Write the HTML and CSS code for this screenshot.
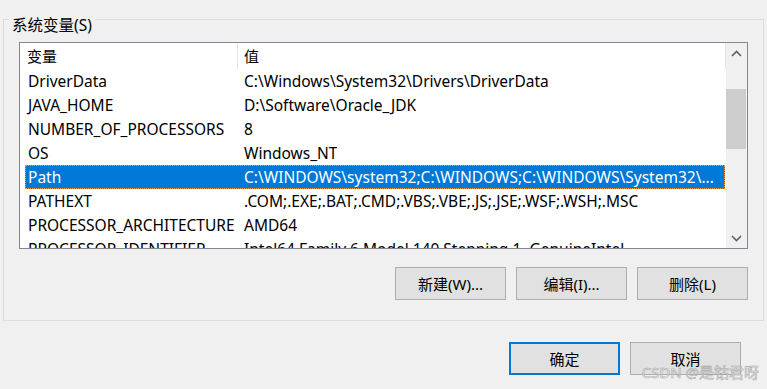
FILE: index.html
```html
<!DOCTYPE html>
<html lang="zh-CN">
<head>
<meta charset="utf-8">
<title>系统变量</title>
<link rel="stylesheet" href="styles.css">
</head>
<body>
<div class="dialog">
  <div class="group">
    <div class="group-title">系统变量(S)</div>
    <div class="listview">
      <div class="list-main">
        <div class="header">
          <div class="hcell hname">变量</div>
          <div class="hcell hvalue">值</div>
        </div>
        <div class="rows">
          <div class="row"><div class="cname">DriverData</div><div class="cvalue">C:\Windows\System32\Drivers\DriverData</div></div>
          <div class="row"><div class="cname">JAVA_HOME</div><div class="cvalue">D:\Software\Oracle_JDK</div></div>
          <div class="row"><div class="cname">NUMBER_OF_PROCESSORS</div><div class="cvalue">8</div></div>
          <div class="row"><div class="cname">OS</div><div class="cvalue">Windows_NT</div></div>
          <div class="row selected"><div class="cname">Path</div><div class="cvalue">C:\WINDOWS\system32;C:\WINDOWS;C:\WINDOWS\System32\...</div></div>
          <div class="row"><div class="cname">PATHEXT</div><div class="cvalue">.COM;.EXE;.BAT;.CMD;.VBS;.VBE;.JS;.JSE;.WSF;.WSH;.MSC</div></div>
          <div class="row"><div class="cname">PROCESSOR_ARCHITECTURE</div><div class="cvalue">AMD64</div></div>
          <div class="row"><div class="cname">PROCESSOR_IDENTIFIER</div><div class="cvalue">Intel64 Family 6 Model 140 Stepping 1, GenuineIntel</div></div>
        </div>
      </div>
      <div class="scrollbar">
        <div class="sb-arrow">
          <svg width="11" height="7" viewBox="0 0 11 7"><path d="M1 6 L5.5 1.5 L10 6" fill="none" stroke="#606060" stroke-width="1.6"/></svg>
        </div>
        <div class="sb-track">
          <div class="sb-thumb"></div>
        </div>
        <div class="sb-arrow">
          <svg width="11" height="7" viewBox="0 0 11 7"><path d="M1 1 L5.5 5.5 L10 1" fill="none" stroke="#606060" stroke-width="1.6"/></svg>
        </div>
      </div>
    </div>
    <div class="group-buttons">
      <button class="btn">新建(W)...</button>
      <button class="btn">编辑(I)...</button>
      <button class="btn">删除(L)</button>
    </div>
  </div>
  <div class="dialog-buttons">
    <button class="btn default">确定</button>
    <button class="btn">取消</button>
  </div>
  <div class="watermark">CSDN @是钴君呀</div>
</div>
</body>
</html>
```
FILE: styles.css
```css
html, body {
  margin: 0;
  padding: 0;
  background: #f0f0f0;
}
body {
  font-family: "Noto Sans", "Noto Sans CJK SC", sans-serif;
  font-size: 15.5px;
  color: #000;
  width: 767px;
  height: 389px;
  overflow: hidden;
}
.dialog {
  position: relative;
  padding-top: 19px;
  height: 370px;
}
.group {
  position: relative;
  margin: 0 3px 0 3px;
  border: 1px solid #dcdcdc;
  padding: 22px 15px 20px 15px;
}
.group-title {
  position: absolute;
  top: -5px;
  left: 5px;
  padding: 0 3px;
  line-height: 20px;
  font-size: 15.5px;
  background: #f0f0f0;
}
.listview {
  display: flex;
  height: 205px;
  border: 1px solid #828790;
  background: #fff;
  overflow: hidden;
}
.list-main {
  flex: 1;
  min-width: 0;
  overflow: hidden;
}
.header {
  display: flex;
  height: 26px;
  align-items: stretch;
  width: 705px;
  border-right: 1px solid #e5e5e5;
}
.hcell {
  line-height: 26px;
  white-space: nowrap;
  font-size: 15px;
}
.hname {
  width: 210px;
  padding-left: 7px;
  border-right: 1px solid #e5e5e5;
}
.hvalue {
  padding-left: 6px;
}
.rows {
  padding-left: 5px;
}
.row {
  display: flex;
  height: 24px;
  line-height: 22px;
  white-space: nowrap;
  box-sizing: border-box;
  width: 700px;
  border: 1px solid transparent;
}
.row.selected {
  background: #0078d7;
  color: #fff;
  border: 1px dotted #f0a040;
}
.cname {
  width: 210px;
  padding-left: 2px;
  flex: none;
  overflow: hidden;
}
.cvalue {
  padding-left: 6px;
  overflow: hidden;
}
.scrollbar {
  width: 21px;
  flex: none;
  display: flex;
  flex-direction: column;
  background: #f0f0f0;
}
.sb-arrow {
  height: 20px;
  flex: none;
  display: flex;
  align-items: center;
  justify-content: center;
}
.sb-track {
  flex: 1;
  padding-top: 26px;
}
.sb-thumb {
  height: 60px;
  background: #cdcdcd;
  margin-right: 1px;
}
.group-buttons {
  display: flex;
  justify-content: flex-end;
  gap: 10px;
  margin-top: 18px;
}
.btn {
  width: 111px;
  height: 33px;
  font-family: "Noto Sans", "Noto Sans CJK SC", sans-serif;
  font-size: 15px;
  color: #000;
  background: #e1e1e1;
  border: 1px solid #adadad;
  padding: 0;
  margin: 0;
}
.btn.default {
  border: 2px solid #0078d7;
}
.dialog-buttons {
  display: flex;
  justify-content: flex-end;
  gap: 10px;
  margin-top: 21px;
  margin-right: 26px;
}
.watermark {
  position: absolute;
  right: 8px;
  bottom: 7px;
  font-size: 15px;
  color: rgba(245, 245, 245, 0.7);
  -webkit-text-stroke: 0.6px rgba(150, 150, 150, 0.8);
  white-space: nowrap;
}
```
